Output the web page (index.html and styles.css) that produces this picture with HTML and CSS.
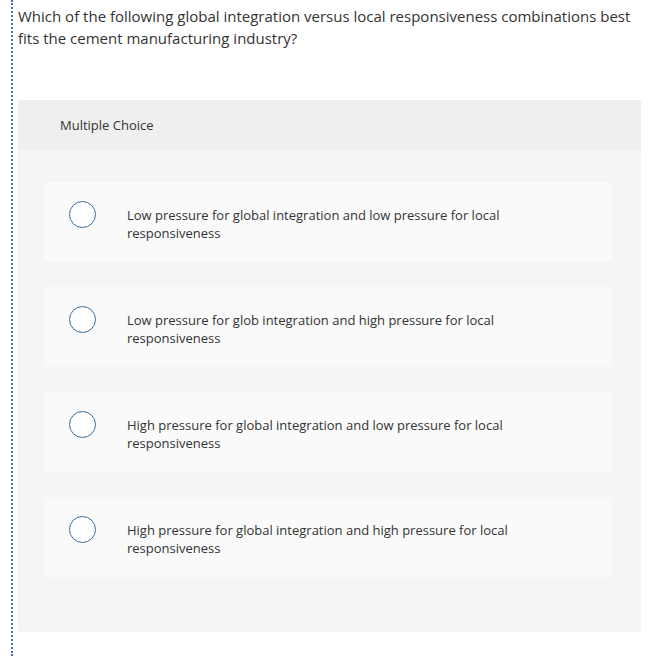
FILE: index.html
```html
<!DOCTYPE html>
<html>
<head>
<meta charset="utf-8">
<link rel="stylesheet" href="styles.css">
</head>
<body>
<div class="page">
  <p class="question">Which of the following global integration versus local responsiveness combinations best fits the cement manufacturing industry?</p>
  <div class="mc">
    <div class="mc-header">Multiple Choice</div>
    <div class="mc-body">
      <div class="option"><span class="radio"></span><span class="label">Low pressure for global integration and low pressure for local responsiveness</span></div>
      <div class="option"><span class="radio"></span><span class="label">Low pressure for glob integration and high pressure for local responsiveness</span></div>
      <div class="option"><span class="radio"></span><span class="label">High pressure for global integration and low pressure for local responsiveness</span></div>
      <div class="option"><span class="radio"></span><span class="label">High pressure for global integration and high pressure for local responsiveness</span></div>
    </div>
  </div>
</div>
</body>
</html>
```
FILE: styles.css
```css
html, body {
  margin: 0;
  padding: 0;
  background: #ffffff;
}
body {
  font-family: "Open Sans", "Liberation Sans", sans-serif;
  color: #333333;
}
.page {
  margin-left: 11px;
  border-left: 2px dotted #3b78c4;
  padding-left: 5px;
  min-height: 656px;
  box-sizing: border-box;
  width: 630px;
}
.question {
  margin: 0;
  padding-top: 5px;
  font-size: 15px;
  line-height: 22px;
  color: #333333;
}
.mc {
  margin-top: 51px;
  width: 623px;
  background: #f5f5f5;
  border-radius: 3px;
}
.mc-header {
  height: 50px;
  background: #efefef;
  padding-left: 42px;
  display: flex;
  align-items: center;
  font-size: 13px;
  color: #333333;
  border-radius: 3px 3px 0 0;
}
.mc-body {
  padding: 32px 29px 55px 26px;
  display: flex;
  flex-direction: column;
  gap: 25px;
}
.option {
  height: 80px;
  background: #fafafa;
  border-radius: 3px;
  display: flex;
  align-items: center;
  padding-left: 25px;
  box-sizing: border-box;
}
.radio {
  flex: none;
  width: 27px;
  height: 27px;
  box-sizing: border-box;
  border: 1.5px solid #3d6b9c;
  border-radius: 50%;
  background: #ffffff;
  margin-top: -15px;
  margin-right: 31px;
}
.label {
  font-size: 13px;
  line-height: 18px;
  color: #333333;
  width: 390px;
  margin-top: 4px;
}
```
